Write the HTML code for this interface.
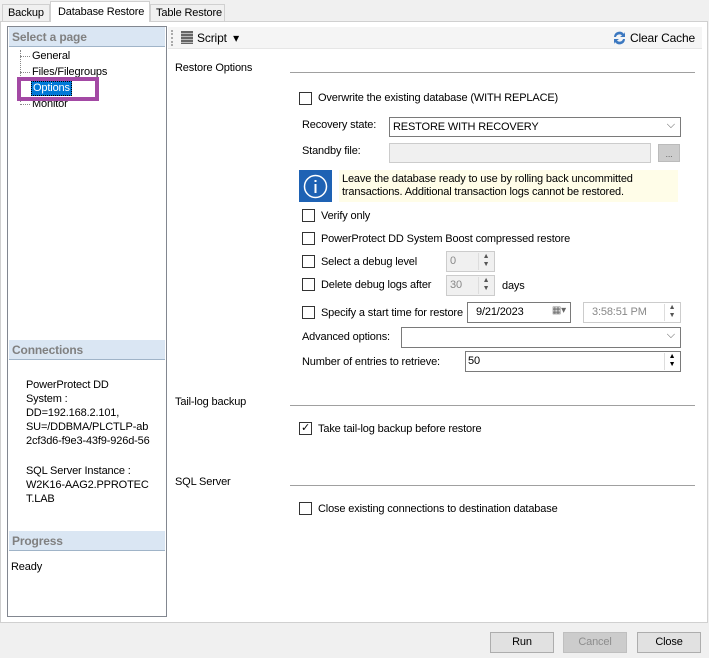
<!DOCTYPE html><html><head><style>
*{box-sizing:border-box;margin:0;padding:0}
body{width:709px;height:658px;background:#f0f0f0;font-family:"Liberation Sans",sans-serif;font-size:11px;letter-spacing:-0.15px;color:#000;position:relative;overflow:hidden}
.a{position:absolute;white-space:nowrap}
.cb{position:absolute;width:13px;height:13px;border:1px solid #333;background:#fff}
.hdr{position:absolute;left:1px;right:1px;height:20px;background:#dae6f3;border-bottom:1px solid #a0b4c8;color:#808080;font-weight:bold;font-size:12px;padding:3px 3px}
.box{position:absolute;background:#fff;border:1px solid #7a7a7a;height:21px;padding:3px 3px}
.sp{position:absolute;right:1px;top:1px;width:15px;bottom:1px;border-left:1px solid #ddd;font-size:7px;color:#555;text-align:center;line-height:8px}
.line{position:absolute;height:1px;background:#a0a0a0}
.btn{position:absolute;top:632px;width:64px;height:21px;border:1px solid #adadad;background:#e1e1e1;text-align:center;line-height:19px}
</style></head><body>
<div class="a" style="left:2px;top:4px;width:48px;height:17px;border:1px solid #d0d0d0;border-bottom:none;padding:2px 5px">Backup</div>
<div class="a" style="left:50px;top:1px;width:100px;height:21px;border:1px solid #d0d0d0;border-bottom:none;background:#fff;padding:4px 7px;z-index:2">Database Restore</div>
<div class="a" style="left:150px;top:4px;width:75px;height:17px;border:1px solid #d0d0d0;border-bottom:none;padding:2px 5px">Table Restore</div>
<div class="a" style="left:0;top:21px;width:708px;height:602px;background:#fff;border:1px solid #d0d0d0"></div>
<div class="a" style="left:7px;top:26px;width:160px;height:591px;border:1px solid #828790;background:#fff">
<div class="hdr" style="top:0">Select a page</div>
<div class="hdr" style="top:313px">Connections</div>
<div class="hdr" style="top:504px">Progress</div>
</div>
<div class="a" style="left:20px;top:50px;width:10px;height:52px;border-left:1px dotted #888"></div>
<div class="a" style="left:20px;top:56px;width:10px;border-top:1px dotted #888"></div>
<div class="a" style="left:20px;top:72px;width:10px;border-top:1px dotted #888"></div>
<div class="a" style="left:20px;top:88px;width:10px;border-top:1px dotted #888"></div>
<div class="a" style="left:20px;top:104px;width:10px;border-top:1px dotted #888"></div>
<div class="a" style="left:32px;top:50px">General</div>
<div class="a" style="left:32px;top:66px">Files/Filegroups</div>
<div class="a" style="left:32px;top:98px">Monitor</div>
<div class="a" style="left:17px;top:77px;width:82px;height:24px;border:4px solid #a349a4;background:#fff"></div>
<div class="a" style="left:31px;top:81px;height:15px;background:#0078d7;color:#fff;padding:0 1px;border:1px dotted #000;line-height:13px">Options</div>
<div class="a" style="left:26px;top:378px;line-height:14px">PowerProtect DD<br>System :<br>DD=192.168.2.101,<br>SU=/DDBMA/PLCTLP-ab<br>2cf3d6-f9e3-43f9-926d-56</div>
<div class="a" style="left:26px;top:464px;line-height:14px">SQL Server Instance :<br>W2K16-AAG2.PPROTEC<br>T.LAB</div>
<div class="a" style="left:11px;top:561px">Ready</div>
<div class="a" style="left:168px;top:27px;width:534px;height:22px;background:#f5f5f5;border-bottom:1px solid #e6e6e6"></div>
<div class="a" style="left:171px;top:30px;height:16px;border-left:2px dotted #aaa"></div>
<div class="a" style="left:181px;top:31px;width:12px;height:13px;background:repeating-linear-gradient(#666 0 2px,#bbb 2px 3px)"></div>
<div class="a" style="left:197px;top:31px;font-size:12px">Script &nbsp;▾</div>
<svg class="a" style="left:612px;top:30px" width="15" height="16" viewBox="0 0 15 16"><path d="M2 7a5.5 5.5 0 0 1 10-3l1-2v5H8l2-1.5A3.5 3.5 0 0 0 4 7z" fill="#3c78c0"/><path d="M13 9a5.5 5.5 0 0 1-10 3l-1 2V9h5l-2 1.5A3.5 3.5 0 0 0 11 9z" fill="#3c78c0"/></svg>
<div class="a" style="left:630px;top:31px;font-size:12px">Clear Cache</div>
<div class="a" style="left:175px;top:62px">Restore Options</div>
<div class="line" style="left:290px;top:72px;width:405px"></div>
<div class="cb" style="left:299px;top:92px"></div><div class="a" style="left:318px;top:92px">Overwrite the existing database (WITH REPLACE)</div>
<div class="a" style="left:302px;top:119px">Recovery state:</div>
<div class="box" style="left:389px;top:117px;width:292px;height:20px;padding:3px 3px">RESTORE WITH RECOVERY<span style="position:absolute;right:5px;top:1px;color:#555">⌵</span></div>
<div class="a" style="left:302px;top:145px">Standby file:</div>
<div class="a" style="left:389px;top:143px;width:262px;height:20px;background:#f0f0f0;border:1px solid #ccc"></div>
<div class="a" style="left:658px;top:144px;width:22px;height:18px;background:#ccc;border:1px solid #bbb;color:#666;font-size:9px;text-align:center;line-height:18px">...</div>
<div class="a" style="left:299px;top:170px;width:33px;height:32px;background:#1e62b4"></div>
<svg class="a" style="left:302px;top:173px" width="27" height="27"><circle cx="13.5" cy="13.5" r="11" fill="none" stroke="#fff" stroke-width="1.5"/><rect x="12.5" y="11" width="2" height="9" fill="#fff"/><rect x="12.5" y="7" width="2" height="2" fill="#fff"/></svg>
<div class="a" style="left:339px;top:170px;width:339px;height:32px;background:#fffde8;padding:3px 3px;line-height:13px">Leave the database ready to use by rolling back uncommitted<br>transactions. Additional transaction logs cannot be restored.</div>
<div class="cb" style="left:302px;top:209px"></div><div class="a" style="left:321px;top:210px">Verify only</div>
<div class="cb" style="left:302px;top:232px"></div><div class="a" style="left:321px;top:233px">PowerProtect DD System Boost compressed restore</div>
<div class="cb" style="left:302px;top:255px"></div><div class="a" style="left:321px;top:256px">Select a debug level</div>
<div class="box" style="left:446px;top:251px;width:49px;background:#f0f0f0;border-color:#ccc;color:#888;padding:3px 3px">0<div class="sp">▲<br>▼</div></div>
<div class="cb" style="left:302px;top:278px"></div><div class="a" style="left:321px;top:279px">Delete debug logs after</div>
<div class="box" style="left:446px;top:275px;width:49px;background:#f0f0f0;border-color:#ccc;color:#888;padding:3px 3px">30<div class="sp">▲<br>▼</div></div>
<div class="a" style="left:502px;top:280px">days</div>
<div class="cb" style="left:302px;top:306px"></div><div class="a" style="left:321px;top:307px">Specify a start time for restore</div>
<div class="box" style="left:467px;top:302px;width:104px;padding:3px 8px">9/21/2023<span style="position:absolute;right:4px;top:2px;color:#666;font-size:10px">▦▾</span></div>
<div class="box" style="left:583px;top:302px;width:98px;border-color:#ccc;color:#888;padding:3px 8px">3:58:51 PM<div class="sp">▲<br>▼</div></div>
<div class="a" style="left:302px;top:331px">Advanced options:</div>
<div class="box" style="left:401px;top:327px;width:280px"><span style="position:absolute;right:5px;top:1px;color:#555">⌵</span></div>
<div class="a" style="left:302px;top:356px">Number of entries to retrieve:</div>
<div class="box" style="left:465px;top:351px;width:216px;padding:3px 2px">50<div class="sp" style="color:#000">▲<br>▼</div></div>
<div class="a" style="left:175px;top:396px">Tail-log backup</div>
<div class="line" style="left:290px;top:405px;width:405px"></div>
<div class="cb" style="left:299px;top:422px;font-size:11px;line-height:11px;text-align:center">✓</div><div class="a" style="left:318px;top:423px">Take tail-log backup before restore</div>
<div class="a" style="left:175px;top:476px">SQL Server</div>
<div class="line" style="left:290px;top:485px;width:405px"></div>
<div class="cb" style="left:299px;top:502px"></div><div class="a" style="left:318px;top:503px">Close existing connections to destination database</div>
<div class="btn" style="left:490px">Run</div>
<div class="btn" style="left:563px;background:#ccc;border-color:#bfbfbf;color:#8d8d8d">Cancel</div>
<div class="btn" style="left:637px">Close</div>
</body></html>
